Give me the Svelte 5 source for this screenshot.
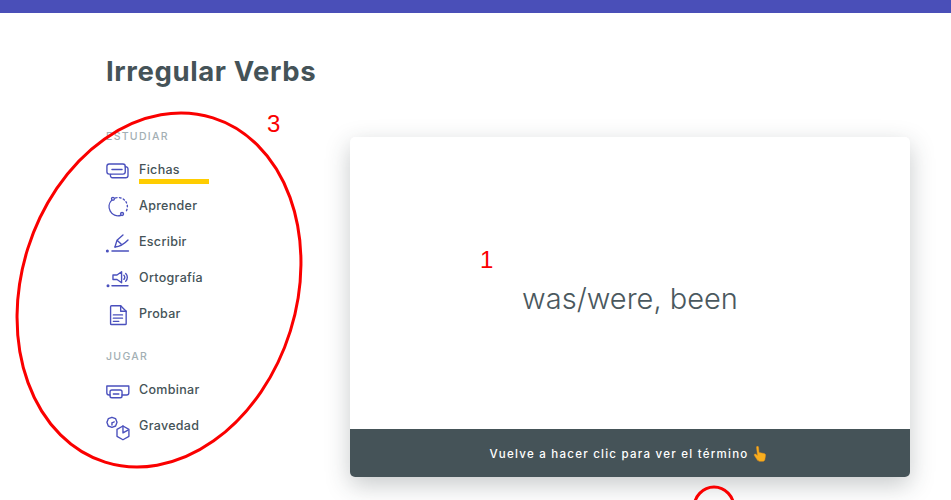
<script lang="ts">
  const study = [
    { name: "Fichas", icon: "cards", active: true },
    { name: "Aprender", icon: "learn" },
    { name: "Escribir", icon: "write" },
    { name: "Ortografía", icon: "spell" },
    { name: "Probar", icon: "test" }
  ];
  const play = [
    { name: "Combinar", icon: "match" },
    { name: "Gravedad", icon: "gravity" }
  ];
</script>

{#snippet icon(kind)}
  <svg class="icon" viewBox="0 0 24 24" fill="none" stroke="#4a50bd" stroke-width="1.5" stroke-linecap="round" stroke-linejoin="round">
    {#if kind === "cards"}
      <rect x="1" y="5.500" width="20" height="11" rx="2.500" />
      <path d="M21 8.500a2.500 2.500 0 0 1 3 2.500v7a2.500 2.500 0 0 1-2.500 2.500h-14a2.500 2.500 0 0 1-2.500-3.500" />
      <path d="M6.500 11.500h11" />
    {:else if kind === "learn"}
      <path d="M6.300 5.600a10 10 0 0 0 9.500 16.800" />
      <path d="M10.500 3.200a10 10 0 0 1 10.500 16" stroke-dasharray="1.600 2.600" />
      <circle cx="7.600" cy="4.200" r="1.600" />
      <circle cx="17.500" cy="20.700" r="1.600" />
    {:else if kind === "write"}
      <path d="M9.800 17.500l2.200-7.500 6.500-5.600M12 10l4.500 4.200" />
      <path d="M9.800 17.500c5-.5 10.200-3.500 14.200-7.700" />
      <path d="M6.500 21.800h18" />
      <circle cx="1.500" cy="21.800" r=".9" fill="#4a50bd" />
    {:else if kind === "spell"}
      <path d="M7.600 8.700h4.400l5-3.500v12l-5-3.500h-4.400z" />
      <path d="M19.500 9a3 3 0 0 1 0 4.500M21.500 7a6 6 0 0 1 0 8.500" />
      <path d="M6.500 20.500h17.500" />
      <circle cx="2.200" cy="20.500" r=".9" fill="#4a50bd" />
    {:else if kind === "test"}
      <path d="M6 3h10l6 6v13.500a1 1 0 0 1-1 1h-15a1 1 0 0 1-1-1v-18.500a1 1 0 0 1 1-1z" />
      <path d="M16 3v6h6M8 13h10M8 16.500h10M8 20h6" />
    {:else if kind === "match"}
      <path d="M4.400 17.500h-1a2.500 2.500 0 0 1-2.500-2.500v-7.400h24v7.400a2.500 2.500 0 0 1-2.500 2.500h-5" />
      <rect x="4.400" y="12" width="13.100" height="8.500" rx="2" />
      <path d="M8 16.300h6" />
    {:else if kind === "gravity"}
      <path d="M6.500 2.500l4 1.500 1.500 4-1.500 4-4 1.500-4-1.500-1.500-4 1.500-4z" />
      <path d="M6.500 8.500l2.500-1M6.500 8.500v2.500" />
      <path d="M18.500 12l6.500 3.700v7.600l-6.500 3.700-6.500-3.700v-7.600z" />
      <path d="M18.500 12v7.500l5.500-3" />
    {/if}
  </svg>
{/snippet}

{#snippet link(item)}
  <li class="item">
    {@render icon(item.icon)}
    <span class="label" class:active={item.active}>{item.name}</span>
  </li>
{/snippet}

<div class="topbar"></div>

<main class="page">
  <h1>Irregular Verbs</h1>
  <div class="content">
    <nav class="sidebar">
      <h2>ESTUDIAR</h2>
      <ul>
        {#each study as item}
          {@render link(item)}
        {/each}
      </ul>
      <h2 class="second">JUGAR</h2>
      <ul class="games">
        {#each play as item}
          {@render link(item)}
        {/each}
      </ul>
    </nav>

    <section class="card">
      <div class="term">was/were, been</div>
      <footer class="hint">
        Vuelve a hacer clic para ver el término
        <svg class="hand" viewBox="0 0 14 16">
          <path d="M3.500 1.200c0-1.300 2-1.300 2 0l.5 5.300 5 1c1.300.3 1.700 1 1.500 2l-.6 4c-.2 1-1 1.800-2 1.800h-3.400c-1 0-1.600-.4-2.100-1.200l-3-4.600c-.6-1 .6-2 1.500-1.200l1.600 1.300z" fill="#f9ae1e" stroke="#e8921a" stroke-width=".5" />
        </svg>
      </footer>
    </section>
  </div>
</main>

<!-- hand-drawn red marks on top of the screenshot -->
<svg class="marks" viewBox="0 0 951 500" fill="none" stroke="#fa0000" stroke-width="3">
  <ellipse cx="159" cy="290" rx="137.600" ry="180.400" transform="rotate(17.400 159 290)" />
  <ellipse cx="714" cy="508" rx="20" ry="21" />
</svg>
<span class="mark one">1</span>
<span class="mark three">3</span>

<style>
  :global(body) {
    margin: 0;
    background: #fff;
  }

  .topbar {
    height: 13px;
    background: #4a4fb8;
  }

  .page {
    padding: 0 41px 23px 106px;
    font-family: Inter, Lato, sans-serif;
    color: #455358;
  }

  h1 {
    margin: 0;
    padding-top: 41px;
    font-size: 27.500px;
    line-height: 34px;
    font-weight: 700;
    letter-spacing: .6px;
  }

  .content {
    display: flex;
    margin-top: 29px;
  }

  .sidebar {
    width: 244px;
    flex: none;
  }

  h2 {
    margin: 13px 0 0;
    font-size: 10.500px;
    line-height: 14px;
    font-weight: 500;
    letter-spacing: 1.300px;
    color: #a3afb4;
  }

  h2.second {
    margin-top: 18px;
  }

  ul {
    list-style: none;
    margin: 8px 0 0;
    padding: 0;
  }

  .item {
    display: flex;
    align-items: center;
    gap: 11px;
    height: 36px;
    font-size: 12.500px;
    font-weight: 500;
    letter-spacing: .3px;
  }

  .icon {
    width: 22px;
    height: 24px;
    flex: none;
    overflow: visible;
  }

  .label {
    position: relative;
    top: -1px;
  }

  .label.active::after {
    content: "";
    position: absolute;
    left: 0;
    bottom: -7px;
    width: 70px;
    height: 5px;
    background: #ffcd00;
  }

  .card {
    width: 560px;
    height: 340px;
    margin-top: 20px;
    border-radius: 5px;
    background: #fff;
    overflow: hidden;
    display: flex;
    flex-direction: column;
    box-shadow: 0 8px 24px rgba(40, 50, 55, .26);
  }

  .term {
    flex: 1;
    display: flex;
    align-items: center;
    justify-content: center;
    padding-top: 30px;
    box-sizing: border-box;
    font-size: 29px;
    font-weight: 300;
    color: #4a585e;
  }

  .hint {
    height: 48px;
    box-sizing: border-box;
    padding: 2px 4px 0 0;
    display: flex;
    align-items: center;
    justify-content: center;
    gap: 4px;
    background: #455358;
    color: #fff;
    font-size: 11.500px;
    font-weight: 500;
    letter-spacing: 1.250px;
  }

  .hand {
    width: 14px;
    height: 16px;
  }

  .marks {
    position: absolute;
    left: 0;
    top: 0;
    width: 951px;
    height: 500px;
    pointer-events: none;
  }

  .mark {
    position: absolute;
    font-family: "Liberation Sans", sans-serif;
    font-size: 24px;
    line-height: 24px;
    color: #fa0000;
  }

  .one {
    left: 480px;
    top: 248px;
  }

  .three {
    left: 267px;
    top: 112px;
  }
</style>
